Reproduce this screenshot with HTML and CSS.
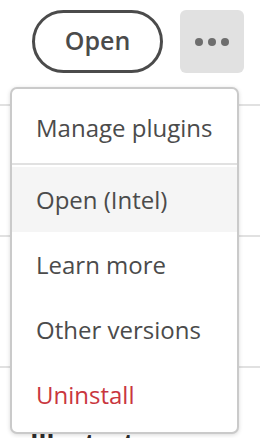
FILE: index.html
```html
<!DOCTYPE html>
<html lang="en">
<head>
    <meta charset="UTF-8">
    <meta name="viewport" content="width=device-width, initial-scale=1.0">
    <title>Plugin actions</title>
    <link rel="stylesheet" href="styles.css">
</head>
<body>
    <div class="page">
        <div class="app-header">
            <button class="open-btn">Open</button>
            <button class="more-btn" aria-label="More actions">
                <span class="dot"></span><span class="dot"></span><span class="dot"></span>
            </button>
        </div>
        <div class="app-row"></div>
        <div class="app-row"></div>
        <div class="app-title">Illustrator</div>

        <ul class="menu">
            <li class="menu-item">Manage plugins</li>
            <li class="menu-divider"></li>
            <li class="menu-item active">Open (Intel)</li>
            <li class="menu-item">Learn more</li>
            <li class="menu-item">Other versions</li>
            <li class="menu-item danger">Uninstall</li>
        </ul>
    </div>
</body>
</html>
```

FILE: styles.css
```css
body {
    margin: 0;
    font-family: "Open Sans", "Noto Sans", sans-serif;
    background-color: #fff;
    color: #4b4b4b;
}

.page {
    position: relative;
    width: 260px;
    height: 438px;
    overflow: hidden;
}

.app-header {
    display: flex;
    justify-content: flex-end;
    align-items: flex-start;
    gap: 17px;
    padding: 10px 16px 0;
    height: 94px;
    border-bottom: 2px solid #e1e1e1;
}

.open-btn {
    width: 131px;
    height: 63px;
    border: 3px solid #4b4b4b;
    border-radius: 32px;
    background: #fff;
    color: #4b4b4b;
    font-family: inherit;
    font-size: 25px;
    font-weight: 600;
    padding: 0 0 3px;
    cursor: pointer;
}

.more-btn {
    display: flex;
    justify-content: center;
    align-items: center;
    gap: 5px;
    width: 64px;
    height: 63px;
    border: none;
    border-radius: 6px;
    background-color: #e1e1e1;
    padding: 0;
    cursor: pointer;
}

.dot {
    width: 8px;
    height: 8px;
    border-radius: 50%;
    background-color: #6e6e6e;
}

.app-row {
    height: 129px;
    border-bottom: 2px solid #e1e1e1;
}

.app-title {
    padding: 57px 0 0 30px;
    font-size: 26px;
    font-weight: 700;
    color: #2c2c2c;
}

.menu {
    position: absolute;
    top: 87px;
    left: 10px;
    width: 225px;
    margin: 0;
    padding: 6px 0 5px;
    list-style: none;
    background-color: #fff;
    border: 2px solid #cacaca;
    border-radius: 7px;
    box-shadow: 0 1px 4px rgba(0, 0, 0, 0.15);
}

.menu-item {
    height: 65px;
    line-height: 65px;
    padding-left: 24px;
    font-size: 24px;
    color: #4b4b4b;
}

.menu-item:first-child {
    height: 68px;
    line-height: 66px;
}

.menu-divider {
    height: 2px;
    margin: 0 0 2px;
    background-color: #e1e1e1;
}

.menu-item.active {
    background-color: #f5f5f5;
}

.menu-item.danger {
    color: #c9363e;
}
```
